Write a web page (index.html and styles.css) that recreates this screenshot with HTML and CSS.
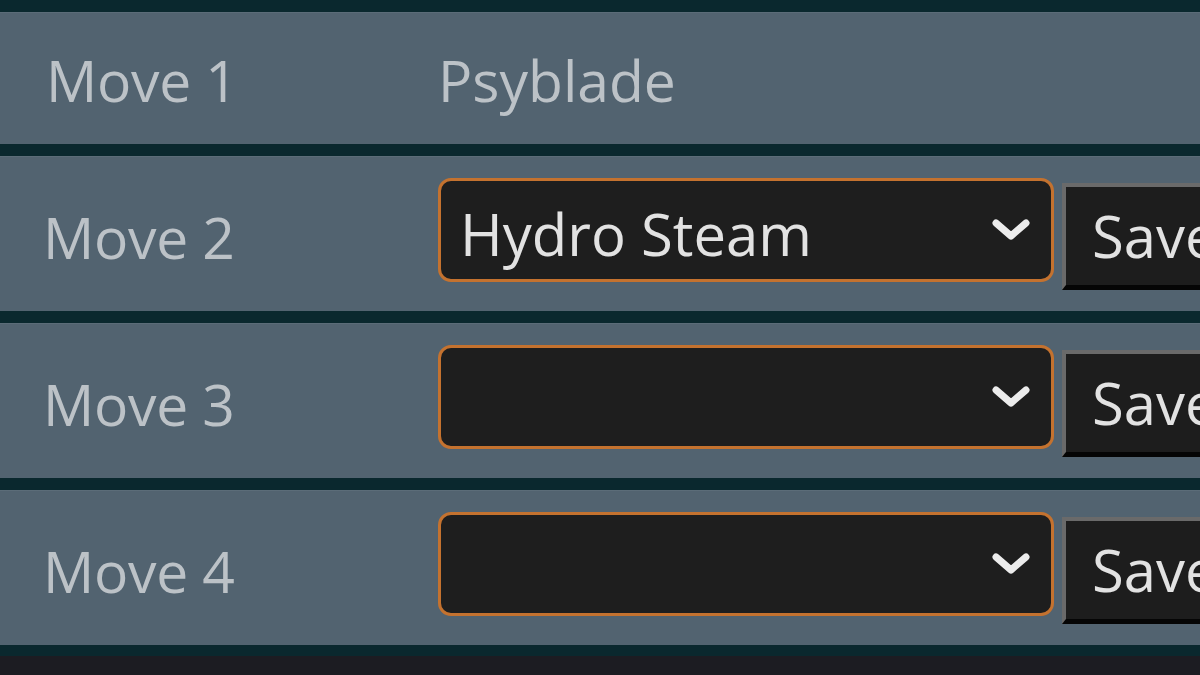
FILE: index.html
```html
<!DOCTYPE html>
<html lang="en">
<head>
<meta charset="utf-8">
<title>Moves</title>
<link rel="stylesheet" href="styles.css">
</head>
<body>
<div class="panel">
  <div class="row row-first">
    <div class="label">Move 1</div>
    <div class="value">Psyblade</div>
  </div>
  <div class="row">
    <div class="label">Move 2</div>
    <div class="select"><span class="select-text">Hydro Steam</span><svg class="chev" viewBox="0 0 40 30" width="40" height="30"><polyline points="5,9 20,22 35,9" /></svg></div>
    <button class="save">Save</button>
  </div>
  <div class="row">
    <div class="label">Move 3</div>
    <div class="select"><span class="select-text"></span><svg class="chev" viewBox="0 0 40 30" width="40" height="30"><polyline points="5,9 20,22 35,9" /></svg></div>
    <button class="save">Save</button>
  </div>
  <div class="row">
    <div class="label">Move 4</div>
    <div class="select"><span class="select-text"></span><svg class="chev" viewBox="0 0 40 30" width="40" height="30"><polyline points="5,9 20,22 35,9" /></svg></div>
    <button class="save">Save</button>
  </div>
</div>
</body>
</html>
```
FILE: styles.css
```css
html, body {
  margin: 0;
  padding: 0;
  background: #1c1c22;
  overflow: hidden;
}
body {
  width: 1200px;
  height: 675px;
  font-family: "Open Sans", "Noto Sans", sans-serif;
}
.panel {
  border-top: 12px solid #0a282e;
  background: #0a282e;
  display: flex;
  flex-direction: column;
  gap: 12px;
  padding-bottom: 11px;
}
.row {
  background: #526370;
  height: 155px;
  display: flex;
  align-items: center;
  padding-left: 43px;
  border-top: 1px solid #5b6c78;
  box-sizing: border-box;
  white-space: nowrap;
  overflow: hidden;
}
.row-first {
  height: 132px;
  padding-left: 46px;
}
.label {
  width: 395px;
  flex: none;
  font-size: 57px;
  color: #bcc2c7;
  letter-spacing: -0.3px;
  margin-top: 6px;
}
.row-first .label {
  width: 392px;
  margin-top: 2px;
}
.value {
  font-size: 57px;
  color: #bcc2c7;
  margin-top: 2px;
}
.select {
  flex: none;
  width: 616px;
  height: 104px;
  box-sizing: border-box;
  border: 3px solid #c4722f;
  border-radius: 13px;
  background: #1e1e1e;
  display: flex;
  align-items: center;
  justify-content: space-between;
  padding: 0 20px 0 19px;
  margin-top: -8px;
}
.select-text {
  font-size: 58px;
  font-weight: 500;
  color: #e2e2e2;
  margin-top: 6px;
}
.chev {
  fill: none;
  stroke: #ececec;
  stroke-width: 7;
  stroke-linecap: round;
  stroke-linejoin: round;
  margin-bottom: 2px;
}
.save {
  flex: none;
  margin-left: 8px;
  margin-top: 4px;
  width: 220px;
  height: 107px;
  box-sizing: border-box;
  background: #1d1d1d;
  border: none;
  border-top: 4px solid #6a6a6a;
  border-left: 4px solid #6a6a6a;
  border-bottom: 5px solid #050505;
  padding: 0 0 0 26px;
  text-align: left;
  font-family: "Open Sans", "Noto Sans", sans-serif;
  font-size: 58px;
  font-weight: 500;
  color: #e2e2e2;
}
```
